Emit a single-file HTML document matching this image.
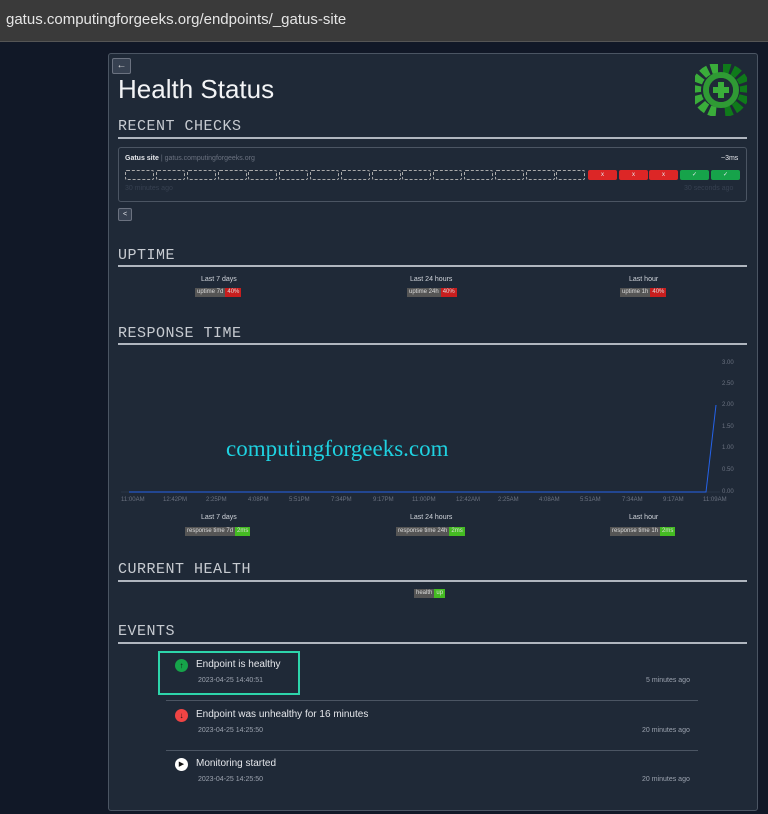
<!DOCTYPE html>
<html><head><meta charset="utf-8"><style>
*{margin:0;padding:0;box-sizing:border-box}
body{width:768px;height:814px;background:#111827;font-family:"Liberation Sans",sans-serif;position:relative;overflow:hidden;color:#e5e7eb}
.a{position:absolute;white-space:nowrap}
.top{left:0;top:0;width:768px;height:42px;background:#3a3a3a;border-bottom:1px solid #555}
.panel{left:108px;top:53px;width:650px;height:758px;background:#1f2937;border:1px solid #4b5563;border-radius:3px}
.h2{font-family:"Liberation Mono",monospace;font-size:15px;color:#c7cbd1;letter-spacing:0.5px}
.hr{height:1.5px;background:#b0b6bf;left:118px;width:629px}
.sm{font-size:7px;color:#d1d5db}
.badge{font-size:6px;height:9px;line-height:9px;display:flex}
.badge span{padding:0 2px;color:#ddd}
.g{background:#555}.r{background:#c81e1e}.gr{background:#44bb22}
.box{top:170px;width:29px;height:10px;border:1px dashed #aaa;border-radius:2px}
.xl{font-size:6px;color:#6b7280;top:497px}
.yl{font-size:6px;color:#6b7280;left:722px}
</style></head><body>
<div class="a top"></div>
<div class="a" style="left:6px;top:11px;font-size:15px;color:#e5e5e5">gatus.computingforgeeks.org/endpoints/_gatus-site</div>
<div class="a panel"></div>
<div class="a" style="left:112px;top:58px;width:19px;height:16px;border:1px solid #6b7280;border-radius:2px;background:#374151;color:#ddd;font-size:10px;text-align:center;line-height:14px">←</div>
<div class="a" style="left:118px;top:74px;font-size:26px;color:#f3f4f6">Health Status</div>
<svg class="a" style="left:695px;top:64px" width="52" height="52" viewBox="0 0 52 52">
<path d="M23 4 A22 22 0 0 0 23 48" fill="none" stroke="#3aad3a" stroke-width="10" stroke-dasharray="7 3"/>
<path d="M28 4 A22 22 0 0 1 28 48" fill="none" stroke="#0f7a1a" stroke-width="10" stroke-dasharray="7 3"/>
<circle cx="26" cy="26" r="15" fill="none" stroke="#2f9a34" stroke-width="6"/>
<circle cx="26" cy="26" r="12" fill="#1f2937"/>
<rect x="23" y="18" width="6" height="16" fill="#3aad3a"/><rect x="18" y="23" width="16" height="6" fill="#3aad3a"/>
</svg>
<div class="a h2" style="left:118px;top:118px">RECENT CHECKS</div><div class="a hr" style="top:137px"></div>
<div class="a" style="left:118px;top:147px;width:629px;height:55px;border:1px solid #4b5563;border-radius:3px"></div>
<div class="a" style="left:125px;top:155px;font-size:7px"><b style="color:#e5e7eb">Gatus site</b> <span style="color:#6b7280">| gatus.computingforgeeks.org</span></div>
<div class="a" style="left:721px;top:155px;font-size:7px">~3ms</div>
<div class="a box" style="left:125px"></div><div class="a box" style="left:156px"></div><div class="a box" style="left:187px"></div><div class="a box" style="left:218px"></div><div class="a box" style="left:248px"></div><div class="a box" style="left:279px"></div><div class="a box" style="left:310px"></div><div class="a box" style="left:341px"></div><div class="a box" style="left:372px"></div><div class="a box" style="left:402px"></div><div class="a box" style="left:433px"></div><div class="a box" style="left:464px"></div><div class="a box" style="left:495px"></div><div class="a box" style="left:526px"></div><div class="a box" style="left:556px"></div>
<div class="a" style="left:588px;top:170px;width:29px;height:10px;background:#dc2626;border-radius:2px;font-size:6px;text-align:center;line-height:10px">x</div>
<div class="a" style="left:619px;top:170px;width:29px;height:10px;background:#dc2626;border-radius:2px;font-size:6px;text-align:center;line-height:10px">x</div>
<div class="a" style="left:649px;top:170px;width:29px;height:10px;background:#dc2626;border-radius:2px;font-size:6px;text-align:center;line-height:10px">x</div>
<div class="a" style="left:680px;top:170px;width:29px;height:10px;background:#16a34a;border-radius:2px;font-size:6px;text-align:center;line-height:10px">✓</div>
<div class="a" style="left:711px;top:170px;width:29px;height:10px;background:#16a34a;border-radius:2px;font-size:6px;text-align:center;line-height:10px">✓</div>
<div class="a" style="left:125px;top:185px;font-size:7px;color:#374151">30 minutes ago</div>
<div class="a" style="left:684px;top:185px;font-size:7px;color:#374151">30 seconds ago</div>
<div class="a" style="left:118px;top:208px;width:14px;height:13px;border:1px solid #6b7280;border-radius:2px;background:#374151;font-size:7px;text-align:center;line-height:11px">&lt;</div>
<div class="a h2" style="left:118px;top:247px">UPTIME</div><div class="a hr" style="top:265px"></div>
<div class="a sm" style="left:201px;top:276px">Last 7 days</div>
<div class="a sm" style="left:410px;top:276px">Last 24 hours</div>
<div class="a sm" style="left:629px;top:276px">Last hour</div>
<div class="a badge" style="left:195px;top:288px"><span class="g">uptime 7d</span><span class="r">40%</span></div>
<div class="a badge" style="left:407px;top:288px"><span class="g">uptime 24h</span><span class="r">40%</span></div>
<div class="a badge" style="left:620px;top:288px"><span class="g">uptime 1h</span><span class="r">40%</span></div>
<div class="a h2" style="left:118px;top:325px">RESPONSE TIME</div><div class="a hr" style="top:343px"></div>
<svg class="a" style="left:0;top:0" width="768" height="814"><line x1="121" y1="492" x2="720" y2="492" stroke="#2a3546"/><polyline points="129,492 706,492 716,405" fill="none" stroke="#2563eb" stroke-width="1"/></svg>
<div class="a yl" style="top:360px">3.00</div><div class="a yl" style="top:381px">2.50</div><div class="a yl" style="top:402px">2.00</div><div class="a yl" style="top:424px">1.50</div><div class="a yl" style="top:445px">1.00</div><div class="a yl" style="top:467px">0.50</div><div class="a yl" style="top:489px">0.00</div>
<div class="a xl" style="left:121px">11:00AM</div><div class="a xl" style="left:163px">12:42PM</div><div class="a xl" style="left:206px">2:25PM</div><div class="a xl" style="left:248px">4:08PM</div><div class="a xl" style="left:289px">5:51PM</div><div class="a xl" style="left:331px">7:34PM</div><div class="a xl" style="left:373px">9:17PM</div><div class="a xl" style="left:412px">11:00PM</div><div class="a xl" style="left:456px">12:42AM</div><div class="a xl" style="left:498px">2:25AM</div><div class="a xl" style="left:539px">4:08AM</div><div class="a xl" style="left:580px">5:51AM</div><div class="a xl" style="left:622px">7:34AM</div><div class="a xl" style="left:663px">9:17AM</div><div class="a xl" style="left:703px">11:09AM</div>
<div class="a" style="left:226px;top:436px;font-family:'Liberation Serif',serif;font-size:23px;color:#1fd1e0">computingforgeeks.com</div>
<div class="a sm" style="left:201px;top:514px">Last 7 days</div>
<div class="a sm" style="left:410px;top:514px">Last 24 hours</div>
<div class="a sm" style="left:629px;top:514px">Last hour</div>
<div class="a badge" style="left:185px;top:527px"><span class="g">response time 7d</span><span class="gr">2ms</span></div>
<div class="a badge" style="left:396px;top:527px"><span class="g">response time 24h</span><span class="gr">2ms</span></div>
<div class="a badge" style="left:610px;top:527px"><span class="g">response time 1h</span><span class="gr">2ms</span></div>
<div class="a h2" style="left:118px;top:561px">CURRENT HEALTH</div><div class="a hr" style="top:580px"></div>
<div class="a badge" style="left:414px;top:589px"><span class="g">health</span><span class="gr">up</span></div>
<div class="a h2" style="left:118px;top:623px">EVENTS</div><div class="a hr" style="top:642px"></div>
<div class="a" style="left:158px;top:651px;width:142px;height:44px;border:2px solid #2dd4aa"></div>
<div class="a" style="left:175px;top:659px;width:13px;height:13px;border-radius:50%;background:#16a34a;font-size:8px;text-align:center;line-height:13px;color:#111">↑</div>
<div class="a" style="left:196px;top:659px;font-size:10px">Endpoint is healthy</div>
<div class="a" style="left:198px;top:677px;font-size:7px;color:#9ca3af">2023-04-25 14:40:51</div>
<div class="a" style="left:646px;top:677px;font-size:7px;color:#9ca3af">5 minutes ago</div>
<div class="a" style="left:166px;top:700px;width:532px;height:1px;background:#4b5563"></div>
<div class="a" style="left:175px;top:709px;width:13px;height:13px;border-radius:50%;background:#ef4444;font-size:8px;text-align:center;line-height:13px;color:#111">↓</div>
<div class="a" style="left:196px;top:709px;font-size:10px">Endpoint was unhealthy for 16 minutes</div>
<div class="a" style="left:198px;top:727px;font-size:7px;color:#9ca3af">2023-04-25 14:25:50</div>
<div class="a" style="left:642px;top:727px;font-size:7px;color:#9ca3af">20 minutes ago</div>
<div class="a" style="left:166px;top:750px;width:532px;height:1px;background:#4b5563"></div>
<div class="a" style="left:175px;top:758px;width:13px;height:13px;border-radius:50%;background:#fff;font-size:7px;text-align:center;line-height:13px;color:#111">▶</div>
<div class="a" style="left:196px;top:758px;font-size:10px">Monitoring started</div>
<div class="a" style="left:198px;top:776px;font-size:7px;color:#9ca3af">2023-04-25 14:25:50</div>
<div class="a" style="left:642px;top:776px;font-size:7px;color:#9ca3af">20 minutes ago</div>
</body></html>
